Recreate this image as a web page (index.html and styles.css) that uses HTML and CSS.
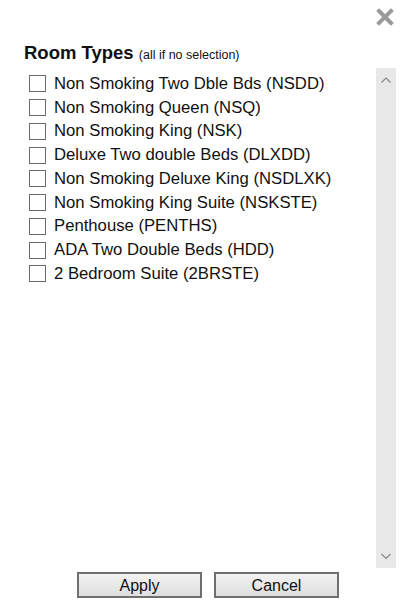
FILE: index.html
```html
<!DOCTYPE html>
<html>
<head>
<meta charset="utf-8">
<link rel="stylesheet" href="styles.css">
</head>
<body>
<div class="dialog">
  <div class="topbar">
    <button class="close" aria-label="Close">
      <svg width="18" height="18" viewBox="0 0 18 18"><path d="M3 3 L15 15 M15 3 L3 15" stroke="#9a9a9a" stroke-width="4" stroke-linecap="square"/></svg>
    </button>
  </div>
  <h2 class="title">Room Types <span class="hint">(all if no selection)</span></h2>
  <div class="listbox">
    <ul class="list">
      <li class="item"><span class="cb"></span>Non Smoking Two Dble Bds (NSDD)</li>
      <li class="item"><span class="cb"></span>Non Smoking Queen (NSQ)</li>
      <li class="item"><span class="cb"></span>Non Smoking King (NSK)</li>
      <li class="item"><span class="cb"></span>Deluxe Two double Beds (DLXDD)</li>
      <li class="item"><span class="cb"></span>Non Smoking Deluxe King (NSDLXK)</li>
      <li class="item"><span class="cb"></span>Non Smoking King Suite (NSKSTE)</li>
      <li class="item"><span class="cb"></span>Penthouse (PENTHS)</li>
      <li class="item"><span class="cb"></span>ADA Two Double Beds (HDD)</li>
      <li class="item"><span class="cb"></span>2 Bedroom Suite (2BRSTE)</li>
    </ul>
    <div class="scrollbar">
      <svg class="arrow" width="20" height="20" viewBox="0 0 20 20"><path d="M5.5 12.5 L10 8 L14.5 12.5" fill="none" stroke="#8a8a8a" stroke-width="1.2"/></svg>
      <svg class="arrow" width="20" height="20" viewBox="0 0 20 20"><path d="M5.5 8 L10 12.5 L14.5 8" fill="none" stroke="#8a8a8a" stroke-width="1.2"/></svg>
    </div>
  </div>
  <div class="footer">
    <button class="btn">Apply</button>
    <button class="btn">Cancel</button>
  </div>
</div>
</body>
</html>
```
FILE: styles.css
```css
html, body {
  margin: 0;
  padding: 0;
  background: #ffffff;
}
body {
  font-family: "Liberation Sans", Arial, sans-serif;
  color: #1a1a1a;
}
.dialog {
  width: 411px;
  height: 609px;
  display: flex;
  flex-direction: column;
}
.topbar {
  display: flex;
  justify-content: flex-end;
  padding: 8px 17px 0 0;
  height: 22px;
}
.close {
  border: 0;
  background: none;
  padding: 0;
  width: 18px;
  height: 18px;
  display: block;
}
.close svg { display: block; }
.title {
  margin: 12px 0 0 24px;
  font-size: 18.5px;
  font-weight: bold;
  line-height: 22px;
  height: 22px;
  color: #111;
}
.hint {
  font-size: 12.5px;
  font-weight: normal;
}
.listbox {
  margin: 4px 15px 0 24px;
  height: 500px;
  display: flex;
}
.list {
  list-style: none;
  margin: 0;
  padding: 4px 0 0 5px;
  flex: 1;
}
.item {
  display: flex;
  align-items: center;
  height: 23.75px;
  font-size: 16.7px;
  color: #111;
  white-space: nowrap;
}
.cb {
  width: 15px;
  height: 15px;
  border: 1px solid #6a6a6a;
  background: #fff;
  margin-right: 8px;
  flex: none;
}
.scrollbar {
  width: 20px;
  background: #e8e8e8;
  display: flex;
  flex-direction: column;
  justify-content: space-between;
  padding: 2px 0;
}
.arrow { display: block; }
.footer {
  display: flex;
  gap: 12px;
  padding: 4px 0 0 77px;
}
.btn {
  width: 125px;
  height: 26px;
  border: 2px solid #6f6f6f;
  background: linear-gradient(#f2f2f2, #dedede);
  font-family: "Liberation Sans", Arial, sans-serif;
  font-size: 16px;
  color: #111;
  padding: 0 0 0 0;
  line-height: 24px;
}
```
